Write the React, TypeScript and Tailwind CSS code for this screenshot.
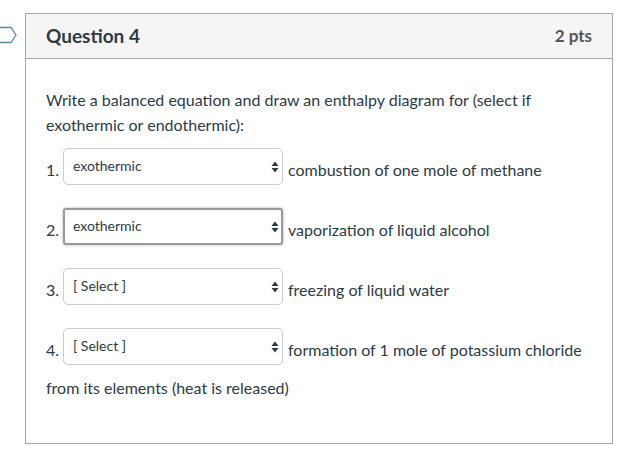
import { useState } from "react"

const rows = [
  { n: "1.", value: "exothermic", text: "combustion of one mole of methane", focus: false },
  { n: "2.", value: "exothermic", text: "vaporization of liquid alcohol", focus: true },
  { n: "3.", value: "", text: "freezing of liquid water", focus: false },
  { n: "4.", value: "", text: "formation of 1 mole of potassium chloride", focus: false },
]

function Arrows() {
  return (
    <svg width="8" height="12" viewBox="0 0 8 12" className="pointer-events-none absolute right-[4px] top-1/2 -translate-y-1/2">
      <path d="M4 0.5 L7.5 5 L0.5 5 Z" fill="#2d3b45" />
      <path d="M4 11.5 L7.5 7 L0.5 7 Z" fill="#2d3b45" />
    </svg>
  )
}

function Dropdown({ init, focus }: { init: string; focus: boolean }) {
  const [val, setVal] = useState(init)
  return (
    <div className="relative h-[37px] w-[220px] shrink-0">
      <select
        value={val}
        onChange={(e) => setVal(e.target.value)}
        className={
          focus
            ? "h-full w-full appearance-none rounded-[3px] border-2 border-[#9a9a9a] bg-white pl-[8px] pb-[2px] text-[14px] text-[#2d3b45] shadow-[0_0_3px_rgba(0,0,0,0.3)] outline-none"
            : "h-full w-full appearance-none rounded-[5px] border border-[#c7cdd1] bg-white pl-[9px] pb-[2px] text-[14px] text-[#2d3b45] outline-none"
        }
        style={{ fontFamily: "Lato, 'Open Sans', sans-serif" }}
      >
        <option value="">[ Select ]</option>
        <option value="exothermic">exothermic</option>
        <option value="endothermic">endothermic</option>
      </select>
      <Arrows />
    </div>
  )
}

export default function App() {
  return (
    <div className="relative h-[458px] w-[631px] overflow-hidden bg-white pl-[25px] pt-[13px] text-[#2d3b45] [font-family:Lato,'Open_Sans',sans-serif]">
      {/* question flag on the left */}
      <svg width="18" height="18" viewBox="0 0 18 18" className="absolute left-0 top-[26px]">
        <path d="M-2 1.5 H11 L16 9 L11 16.5 H-2 Z" fill="white" stroke="#5a88a8" strokeWidth="1.3" />
      </svg>

      <div className="flex h-[431px] w-[588px] flex-col border border-[#a8a8a8]">
        <div className="flex h-[45px] shrink-0 items-center justify-between border-b border-[#a8a8a8] bg-[#f5f5f5] px-[20px]">
          <span className="text-[19px] font-bold text-[#2d3b45]">Question 4</span>
          <span className="text-[17px] font-bold text-[#555555]">2 pts</span>
        </div>

        <div className="px-[20px] pt-[28px] text-[16px] leading-[25px]">
          <p>
            Write a balanced equation and draw an enthalpy diagram for (select if
            <br />
            exothermic or endothermic):
          </p>

          <div className="mt-[11px] flex flex-col gap-[23px]">
            {rows.map((r) => (
              <div key={r.n} className="flex items-center">
                <span className="mt-[6px] w-[17px] shrink-0">{r.n}</span>
                <Dropdown init={r.value} focus={r.focus} />
                <span className="ml-[5px] mt-[6px] whitespace-nowrap">{r.text}</span>
              </div>
            ))}
          </div>

          <p className="mt-[10px]">from its elements (heat is released)</p>
        </div>
      </div>
    </div>
  )
}
